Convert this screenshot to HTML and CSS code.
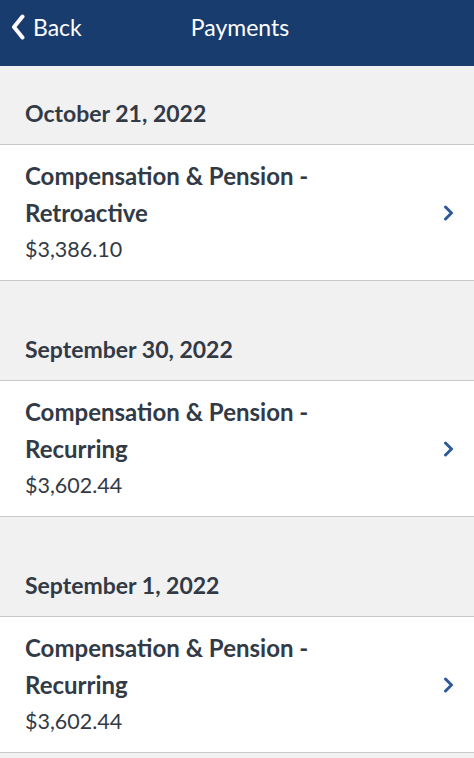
FILE: index.html
```html
<!DOCTYPE html>
<html lang="en">
<head>
    <meta charset="UTF-8">
    <meta name="viewport" content="width=device-width, initial-scale=1.0">
    <title>Payments</title>
    <link rel="stylesheet" href="styles.css">
</head>
<body>
    <header class="nav-bar">
        <a class="back-link" href="#">
            <svg class="back-icon" width="14" height="26" viewBox="0 0 14 26" aria-hidden="true">
                <polyline points="11.5,2.5 3,13 11.5,23.5" fill="none" stroke="#fff" stroke-width="4" stroke-linecap="round" stroke-linejoin="round"/>
            </svg>
            <span>Back</span>
        </a>
        <h1 class="nav-title">Payments</h1>
        <span></span>
    </header>
    <main>
        <section class="group">
            <h2 class="group-date">October 21, 2022</h2>
            <a class="payment" href="#">
                <div class="payment-info">
                    <div class="payment-type">Compensation &amp; Pension - Retroactive</div>
                    <div class="payment-amount">$3,386.10</div>
                </div>
                <svg class="chevron" width="12" height="16" viewBox="0 0 12 16" aria-hidden="true">
                    <polyline points="2.5,2 8.5,8 2.5,14" fill="none" stroke="#2e5b96" stroke-width="3" stroke-linecap="round" stroke-linejoin="round"/>
                </svg>
            </a>
        </section>
        <section class="group">
            <h2 class="group-date">September 30, 2022</h2>
            <a class="payment" href="#">
                <div class="payment-info">
                    <div class="payment-type">Compensation &amp; Pension - Recurring</div>
                    <div class="payment-amount">$3,602.44</div>
                </div>
                <svg class="chevron" width="12" height="16" viewBox="0 0 12 16" aria-hidden="true">
                    <polyline points="2.5,2 8.5,8 2.5,14" fill="none" stroke="#2e5b96" stroke-width="3" stroke-linecap="round" stroke-linejoin="round"/>
                </svg>
            </a>
        </section>
        <section class="group">
            <h2 class="group-date">September 1, 2022</h2>
            <a class="payment" href="#">
                <div class="payment-info">
                    <div class="payment-type">Compensation &amp; Pension - Recurring</div>
                    <div class="payment-amount">$3,602.44</div>
                </div>
                <svg class="chevron" width="12" height="16" viewBox="0 0 12 16" aria-hidden="true">
                    <polyline points="2.5,2 8.5,8 2.5,14" fill="none" stroke="#2e5b96" stroke-width="3" stroke-linecap="round" stroke-linejoin="round"/>
                </svg>
            </a>
        </section>
    </main>
</body>
</html>
```

FILE: styles.css
```css
body {
    font-family: Lato, "Liberation Sans", sans-serif;
    margin: 0;
    padding: 0;
    background-color: #f1f1f1;
    color: #323a45;
}
.nav-bar {
    display: grid;
    grid-template-columns: 1fr auto 1fr;
    align-items: start;
    height: 66px;
    padding: 12px 0 0;
    box-sizing: border-box;
    background-color: #193c6e;
    color: white;
}
.back-link {
    display: flex;
    align-items: center;
    gap: 8px;
    padding-left: 11px;
    color: white;
    text-decoration: none;
    font-size: 23px;
    line-height: 30px;
}
.back-icon {
    display: block;
}
.nav-title {
    margin: 0 0 0 6px;
    font-size: 23px;
    font-weight: normal;
    line-height: 30px;
}
.group + .group {
    padding-top: 21px;
}
.group-date {
    margin: 0;
    padding: 32px 25px 16px;
    font-size: 23px;
    font-weight: bold;
    line-height: 30px;
    border-bottom: 1px solid #c9c9c9;
}
.payment {
    display: flex;
    align-items: center;
    padding: 12px 19px 12px 25px;
    background-color: white;
    border-bottom: 1px solid #c9c9c9;
    color: inherit;
    text-decoration: none;
}
.payment-info {
    flex: 1;
    max-width: 320px;
}
.payment-type {
    font-size: 24px;
    font-weight: bold;
    line-height: 37px;
}
.payment-amount {
    font-size: 21.5px;
    line-height: 37px;
}
.chevron {
    display: block;
    margin-left: auto;
}
```
